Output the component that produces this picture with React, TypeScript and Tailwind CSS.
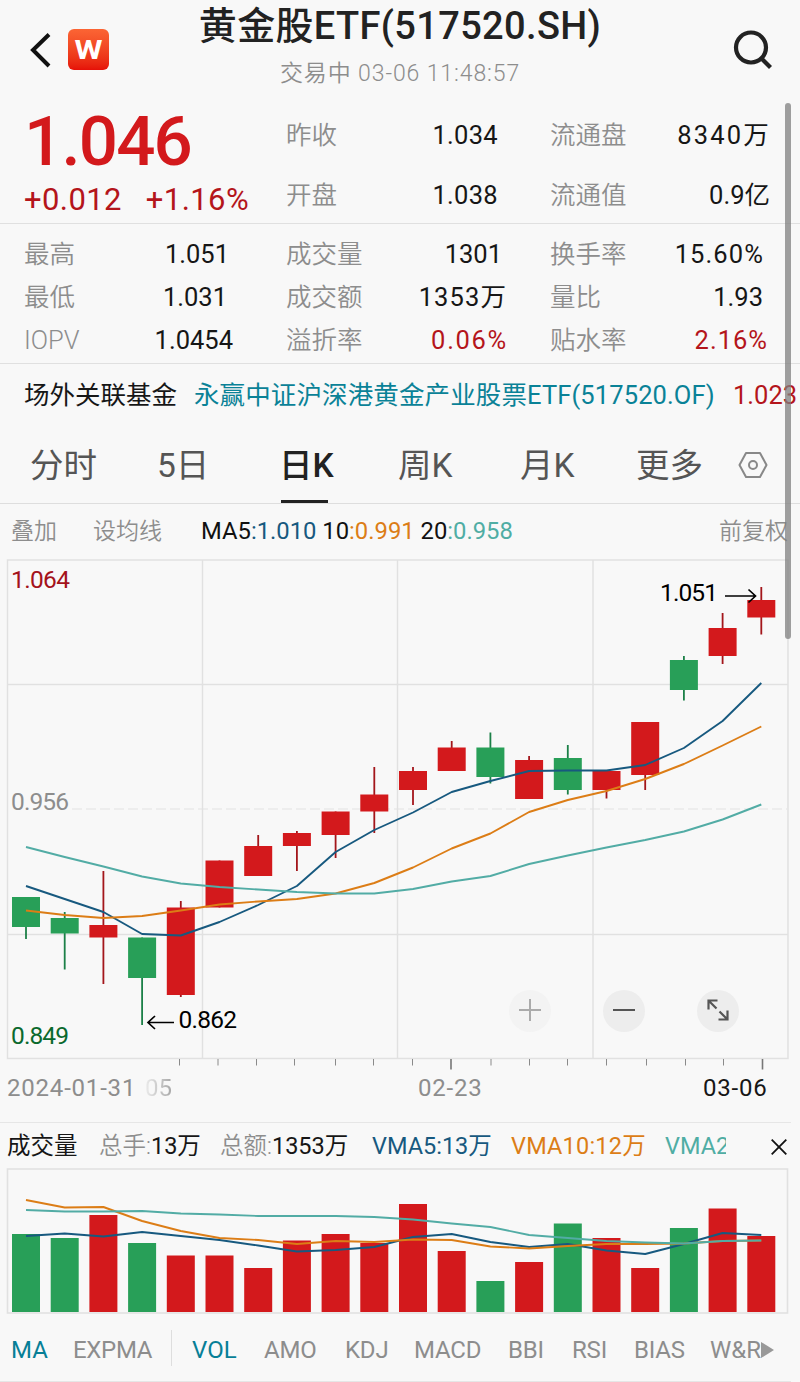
import React, { useState } from 'react';
import { clsx } from 'clsx';

interface Candle {
  top: number;
  bottom: number;
  high: number;
  low: number;
  up: boolean;
}

const RED = '#d3191c';
const GREEN = '#289f58';

const candles: Candle[] = [
  { top: 897, bottom: 927, high: 897, low: 939, up: false },
  { top: 918, bottom: 933.5, high: 912, low: 969.5, up: false },
  { top: 925, bottom: 937.5, high: 871, low: 984, up: true },
  { top: 937.5, bottom: 978, high: 937.5, low: 1025, up: false },
  { top: 907.5, bottom: 995, high: 901, low: 997, up: true },
  { top: 860.5, bottom: 907.5, high: 860.5, low: 907.5, up: true },
  { top: 846, bottom: 876, high: 835, low: 876, up: true },
  { top: 833, bottom: 846, high: 831, low: 871, up: true },
  { top: 811.5, bottom: 835, high: 811.5, low: 858, up: true },
  { top: 794.5, bottom: 811.5, high: 767, low: 833, up: true },
  { top: 771, bottom: 790, high: 767, low: 805, up: true },
  { top: 747.5, bottom: 771, high: 741, low: 771, up: true },
  { top: 747.5, bottom: 777, high: 732.5, low: 783.5, up: false },
  { top: 760, bottom: 799, high: 756, low: 799, up: true },
  { top: 758, bottom: 790, high: 745, low: 794.5, up: false },
  { top: 771, bottom: 790, high: 771, low: 798.5, up: true },
  { top: 722, bottom: 775, high: 722, low: 790, up: true },
  { top: 660, bottom: 690, high: 656, low: 700.5, up: false },
  { top: 628, bottom: 656, high: 613, low: 664, up: true },
  { top: 600, bottom: 617.5, high: 587, low: 634.5, up: true },
];

const ma5 = [886, 899, 912, 934, 935.5, 922, 905, 886, 852, 830, 812.5, 792, 781, 771, 770.5, 770.5, 765, 748, 721, 683];
const ma10 = [910.5, 915, 918, 916, 910.5, 904.5, 901.5, 899, 893.5, 883, 867.5, 848.5, 833.5, 812, 800, 791, 779, 764, 745.5, 726.5];
const ma20 = [847, 857, 866.5, 876.5, 883.5, 887, 889.5, 892, 893.5, 893.5, 889, 881.5, 876, 864, 855.5, 847.5, 840, 831.5, 819.5, 804.5];

const volumes = [1234, 1238, 1215, 1243, 1255.5, 1255.5, 1268, 1240.5, 1234, 1243, 1204, 1251, 1281, 1262, 1223.5, 1238, 1268, 1228, 1208.5, 1236];
const vma5 = [1236, 1233.5, 1236.5, 1232, 1236, 1240, 1245.5, 1251.5, 1250, 1247, 1237, 1234, 1242, 1247, 1244, 1250.5, 1254, 1244, 1233, 1235];
const vma10 = [1200, 1207.5, 1207, 1221, 1231, 1238, 1240, 1244, 1241, 1242, 1239.5, 1240, 1246.5, 1248.5, 1246, 1244, 1244, 1243.5, 1241, 1240.5];
const vma20 = [1210, 1211.5, 1211.5, 1211, 1213.5, 1214.5, 1216, 1216, 1216, 1217, 1219.5, 1223.5, 1227, 1235, 1238, 1241, 1242.5, 1243.5, 1241, 1240.5];

const ticks = [179.5, 218, 256.5, 294.5, 335.5, 373.5, 412.5, 491, 529.5, 567.5, 606.5, 646.5, 685.5, 723.5];

const xAt = (i: number) => 26 + i * 38.7;
const toPoints = (ys: number[]) => ys.map((y, i) => `${xAt(i).toFixed(1)},${y}`).join(' ');

const Line = ({ ys, color }: { ys: number[]; color: string }) => (
  <polyline points={toPoints(ys)} fill="none" stroke={color} strokeWidth="1.9" strokeLinejoin="round" />
);

interface StatProps {
  label: string;
  value: string;
  className: string;
}

// label on the left, value right-aligned; className carries the cell width and value tone
const Stat = ({ label, value, className }: StatProps) => (
  <div className={clsx('flex items-center justify-between whitespace-nowrap', className)}>
    <span className="font-[350] tracking-normal text-[#8d8d8d]">{label}</span>
    <span>{value}</span>
  </div>
);

const Header = () => (
  <header className="grid h-[100px] grid-cols-[190px_1fr_190px]">
    <div className="flex items-start pl-7 pt-[29px]">
      <svg width="40" height="42" viewBox="28 29 40 42" fill="none" stroke="#111" strokeWidth="4">
        <path d="M49 34.5 33 50l16 16" />
      </svg>
      <div className="flex h-[41px] w-[41px] items-center justify-center rounded-[6px] bg-linear-to-b from-[#fb6534] to-[#e60f08]">
        <svg width="41" height="41" viewBox="0 0 41 41">
          <text x="20.5" y="30" textAnchor="middle" textLength="28" lengthAdjust="spacingAndGlyphs" fontSize="26" fontWeight="700" fontFamily="Roboto, sans-serif" fill="#fff">W</text>
        </svg>
      </div>
    </div>
    <div className="flex flex-col items-center whitespace-nowrap">
      <h1 className="mt-[4px] text-[38px] font-medium leading-[44px] tracking-[0.35px] text-[#222]">黄金股ETF(517520.SH)</h1>
      <p className="mt-[12px] text-[23px] font-[350] leading-[28px] tracking-[0.9px] text-[#8d8d8d]">交易中 03-06 11:48:57</p>
    </div>
    <div className="flex justify-end pr-[26px] pt-7">
      <svg width="42" height="44" viewBox="732 28 42 44" fill="none" stroke="#222" strokeWidth="4.2">
        <circle cx="751" cy="47.5" r="15" />
        <path d="m761 58 9.5 9.5" />
      </svg>
    </div>
  </header>
);

const Quote = () => (
  <section className="flex h-[124px] border-b border-[#e0e0e0] text-[25.5px] leading-none text-[#161616]">
    <div className="w-[286px] whitespace-nowrap pl-6 text-[#d3191c]">
      <div className="mt-[9px] text-[69px] font-medium leading-[66px] tracking-[-1.8px]">1.046</div>
      <div className="mt-[10px] flex gap-[24px] text-[31px] leading-[30px] tracking-[0.4px] text-[#b4151b]">
        <span>+0.012</span>
        <span>+1.16%</span>
      </div>
    </div>
    <div className="grid w-[264px] grid-rows-[72px_47px]">
      <Stat label="昨收" value="1.034" className="w-[212px] tracking-[0.3px]" />
      <Stat label="开盘" value="1.038" className="w-[212px] tracking-[0.3px]" />
    </div>
    <div className="grid grid-rows-[72px_47px]">
      <Stat label="流通盘" value="8340万" className="w-[221px] tracking-[2.2px]" />
      <Stat label="流通值" value="0.9亿" className="w-[220px]" />
    </div>
  </section>
);

const Details = () => (
  <section className="h-[140px] border-b border-[#e0e0e0] pl-6 pt-[9px] text-[25.5px] leading-none text-[#161616]">
    <div className="grid grid-cols-[262px_264px_1fr] grid-rows-[43px_43px_43px]">
      <Stat label="最高" value="1.051" className="w-[205px]" />
      <Stat label="成交量" value="1301" className="w-[216px]" />
      <Stat label="换手率" value="15.60%" className="w-[214px] tracking-[1.1px]" />
      <Stat label="最低" value="1.031" className="w-[203px]" />
      <Stat label="成交额" value="1353万" className="w-[221px] tracking-[1.1px]" />
      <Stat label="量比" value="1.93" className="w-[213px]" />
      <Stat label="IOPV" value="1.0454" className="w-[209px]" />
      <Stat label="溢折率" value="0.06%" className="w-[222px] tracking-[1.7px] text-[#b4151b]" />
      <Stat label="贴水率" value="2.16%" className="w-[218px] tracking-[1px] text-[#b4151b]" />
    </div>
  </section>
);

const periods = [
  { name: '分时', width: 'w-[127px]' },
  { name: '5日', width: 'w-[122px]' },
  { name: '日K', width: 'w-[119px]' },
  { name: '周K', width: 'w-[122px]' },
  { name: '月K', width: 'w-[116px]' },
  { name: '更多', width: 'w-[101px]' },
];

const PeriodTabs = () => {
  const [active, setActive] = useState('日K');

  return (
    <nav className="flex h-[78px] border-b border-[#dedede] pl-[30px] text-[33.5px] leading-none text-[#555]">
      {periods.map(({ name, width }) => (
        <button key={name} onClick={() => setActive(name)} className={clsx('flex flex-col items-start whitespace-nowrap', width)}>
          <span className={clsx('flex h-[74px] items-center pt-[6px]', active === name && 'font-medium text-[#222]')}>{name}</span>
          {active === name && <span className="ml-[2px] h-[3px] w-[47px] bg-[#222]" />}
        </button>
      ))}
      <svg className="mt-[23px]" width="32" height="32" viewBox="0 0 32 32" fill="none" stroke="#888" strokeWidth="2">
        <path d="M9 4h14l6.5 12L23 28H9L2.500 16z" strokeLinejoin="round" />
        <circle cx="16" cy="16" r="4" />
      </svg>
    </nav>
  );
};

const Averages = () => (
  <div className="flex h-[55px] items-center whitespace-nowrap pl-[11px] text-[23px] leading-none text-[#111]">
    <span className="w-[82px] font-[350] text-[#8d8d8d]">叠加</span>
    <span className="w-[108px] font-[350] text-[#8d8d8d]">设均线</span>
    <span className="w-[518px] text-[23.8px]">
      MA5<span className="text-[#17597f]">:1.010</span> 10<span className="text-[#dc7d16]">:0.991</span> 20<span className="text-[#4fada4]">:0.958</span>
    </span>
    <span className="font-[350] text-[#8d8d8d]">前复权</span>
  </div>
);

const PriceChart = () => (
  <div className="relative h-[514px]">
    <svg className="block" width="800" height="514" viewBox="0 559 800 514" fontFamily="Roboto, 'Noto Sans CJK SC', sans-serif" fontSize="24.5">
      <g fill="none" stroke="#e1e1e1" strokeWidth="1.5">
        <rect x="7.5" y="560" width="780.5" height="498.5" />
        <path d="M202.500 560v498M397.500 560v498M593 560v498M8 684.500h780M8 934.500h780" />
        <path d="M72 809h715" strokeDasharray="10 4" strokeWidth="1.2" />
      </g>
      {ticks.map((x) => (
        <path key={x} d={`M${x} 1059v6.500`} stroke="#8a8a8a" />
      ))}
      <path d="M451 1059v10.500M762.500 1059v10.500" stroke="#777" strokeWidth="1.6" />
      {candles.map((c, i) => (
        <g key={i} fill={c.up ? RED : GREEN}>
          <rect x={xAt(i) - 0.9} y={c.high} width="1.8" height={c.low - c.high} fill={c.up ? '#a3161b' : '#1c8048'} />
          <rect x={xAt(i) - 14} y={c.top} width="28" height={c.bottom - c.top} />
        </g>
      ))}
      <Line ys={ma5} color="#17597f" />
      <Line ys={ma10} color="#dc7d16" />
      <Line ys={ma20} color="#52aca5" />
      <text x="11" y="587.5" textLength="59" fill="#a4121b">1.064</text>
      <text x="11" y="810" textLength="58" fill="#8d8d8d">0.956</text>
      <text x="11" y="1044" textLength="58" fill="#0a692d">0.849</text>
      <text x="660" y="601" textLength="58" fill="#000">1.051</text>
      <text x="178.500" y="1028" textLength="58.500" fill="#000">0.862</text>
      <g fill="none" stroke="#000" strokeWidth="1.7">
        <path d="M725 596h30.500M748.500 589.500l7 6.500-7 6.500" />
        <path d="M174 1022.500h-26M155 1016l-7 6.500 7 6.500" />
      </g>
    </svg>
    <div className="absolute left-[508.5px] top-[430.5px] flex gap-[52px]">
      <button className="flex h-[42px] w-[42px] items-center justify-center rounded-full bg-[#f3f3f3]">
        <svg className="-mt-0.5" width="22" height="22" viewBox="0 0 22 22" stroke="#aaa" strokeWidth="2"><path d="M0 11h22M11 0v22" /></svg>
      </button>
      <button className="flex h-[42px] w-[42px] items-center justify-center rounded-full bg-[#ededed]">
        <svg className="-mt-0.5" width="22" height="22" viewBox="0 0 22 22" stroke="#555" strokeWidth="2"><path d="M0 11h22" /></svg>
      </button>
      <button className="flex h-[42px] w-[42px] items-center justify-center rounded-full bg-[#ededed]">
        <svg className="-mt-0.5" width="22" height="22" viewBox="0 0 22 22" fill="none" stroke="#555" strokeWidth="2.2">
          <path d="M10.500 1.500h-9v9M1.500 1.500l8 8M12.500 12.500l8 8M11.500 20.500h9v-9" />
        </svg>
      </button>
    </div>
  </div>
);

const DateAxis = () => (
  <div className="mr-[9px] flex h-[50px] items-center whitespace-nowrap border-b border-[#e6e6e6] pb-[20px] pl-[7px] text-[24px] leading-none tracking-[0.8px] text-[#8d8d8d]">
    <span className="w-[138px]">2024-01-31</span>
    <span className="w-[273px] bg-linear-to-r from-[#ececec] to-[#a8a8a8] bg-[length:27px_100%] bg-no-repeat bg-clip-text tracking-normal text-transparent">05</span>
    <span className="w-[285px]">02-23</span>
    <span className="text-[#161616]">03-06</span>
  </div>
);

const VolumeHeader = () => (
  <div className="flex h-[45px] items-center whitespace-nowrap pl-[7px] pt-[3px] text-[23.500px] leading-none text-[#161616]">
    <span className="w-[92px]">成交量</span>
    <span className="w-[121px]"><span className="font-[350] text-[#8d8d8d]">总手:</span>13万</span>
    <span className="w-[152px]"><span className="font-[350] text-[#8d8d8d]">总额:</span>1353万</span>
    <span className="w-[139px] text-[#17597f]">VMA5:13万</span>
    <span className="w-[154px] tracking-[0.2px] text-[#dc7d16]">VMA10:12万</span>
    <span className="w-[61px] overflow-hidden text-[#4fada4]">VMA2</span>
    <svg className="ml-[45px]" width="16" height="16" viewBox="0 0 16 16" stroke="#111" strokeWidth="1.8">
      <path d="m.7.7 14.600 14.600M15.300.7.7 15.300" />
    </svg>
  </div>
);

const VolumeChart = () => (
  <svg className="block" width="800" height="147" viewBox="0 1168 800 147">
    <rect x="7.500" y="1169" width="780" height="144" fill="none" stroke="#e1e1e1" strokeWidth="1.600" />
    {volumes.map((y, i) => (
      <rect key={i} x={xAt(i) - 14} y={y} width="28" height={1312 - y} fill={candles[i].up ? RED : GREEN} />
    ))}
    <Line ys={vma5} color="#17597f" />
    <Line ys={vma10} color="#dc7d16" />
    <Line ys={vma20} color="#52aca5" />
  </svg>
);

const indicators = [
  { name: 'AMO', width: 'w-[81px]' },
  { name: 'KDJ', width: 'w-[69px]' },
  { name: 'MACD', width: 'w-[94px]' },
  { name: 'BBI', width: 'w-[64px]' },
  { name: 'RSI', width: 'w-[62px]' },
  { name: 'BIAS', width: 'w-[76px]' },
];

const IndicatorBar = () => (
  <div className="mr-[9px] flex h-[67px] items-center whitespace-nowrap border-b border-[#e6e6e6] pl-[11px] pt-[3px] text-[24px] leading-none text-[#8d8d8d]">
    <span className="w-[62px] text-[#077f97]">MA</span>
    <span className="w-[98px] tracking-[-0.3px]">EXPMA</span>
    <span className="-mt-[3px] h-9 w-px bg-[#dedede]" />
    <span className="ml-5 w-[72px] text-[#077f97]">VOL</span>
    {indicators.map(({ name, width }) => (
      <span key={name} className={clsx('tracking-[-0.2px]', width)}>{name}</span>
    ))}
    <span className="relative">
      W&amp;R
      <svg className="absolute left-[51px] top-[4px]" width="13" height="16" viewBox="0 0 13 16" fill="#999">
        <path d="M0 0 13 8 0 16z" />
      </svg>
    </span>
  </div>
);

export default function App() {
  return (
    <main className="relative h-[1382px] w-[800px] overflow-hidden bg-[#f8f8f8] font-[Roboto,'Noto_Sans_CJK_SC',sans-serif]">
      <Header />
      <Quote />
      <Details />
      <div className="flex h-[62px] items-center whitespace-nowrap pl-6 pt-[2px] text-[25.500px] leading-none text-[#161616]">
        <span className="w-[170px]">场外关联基金</span>
        <span className="w-[539px] tracking-[0.12px] text-[#0a8297]">永赢中证沪深港黄金产业股票ETF(517520.OF)</span>
        <span className="text-[#b4151b]">1.023</span>
      </div>
      <PeriodTabs />
      <Averages />
      <PriceChart />
      <DateAxis />
      <VolumeHeader />
      <VolumeChart />
      <IndicatorBar />
      {/* page scroll thumb */}
      <div className="absolute left-[785px] top-[103px] h-[536px] w-[6px] rounded-full bg-[#808080]/75" />
    </main>
  );
}
